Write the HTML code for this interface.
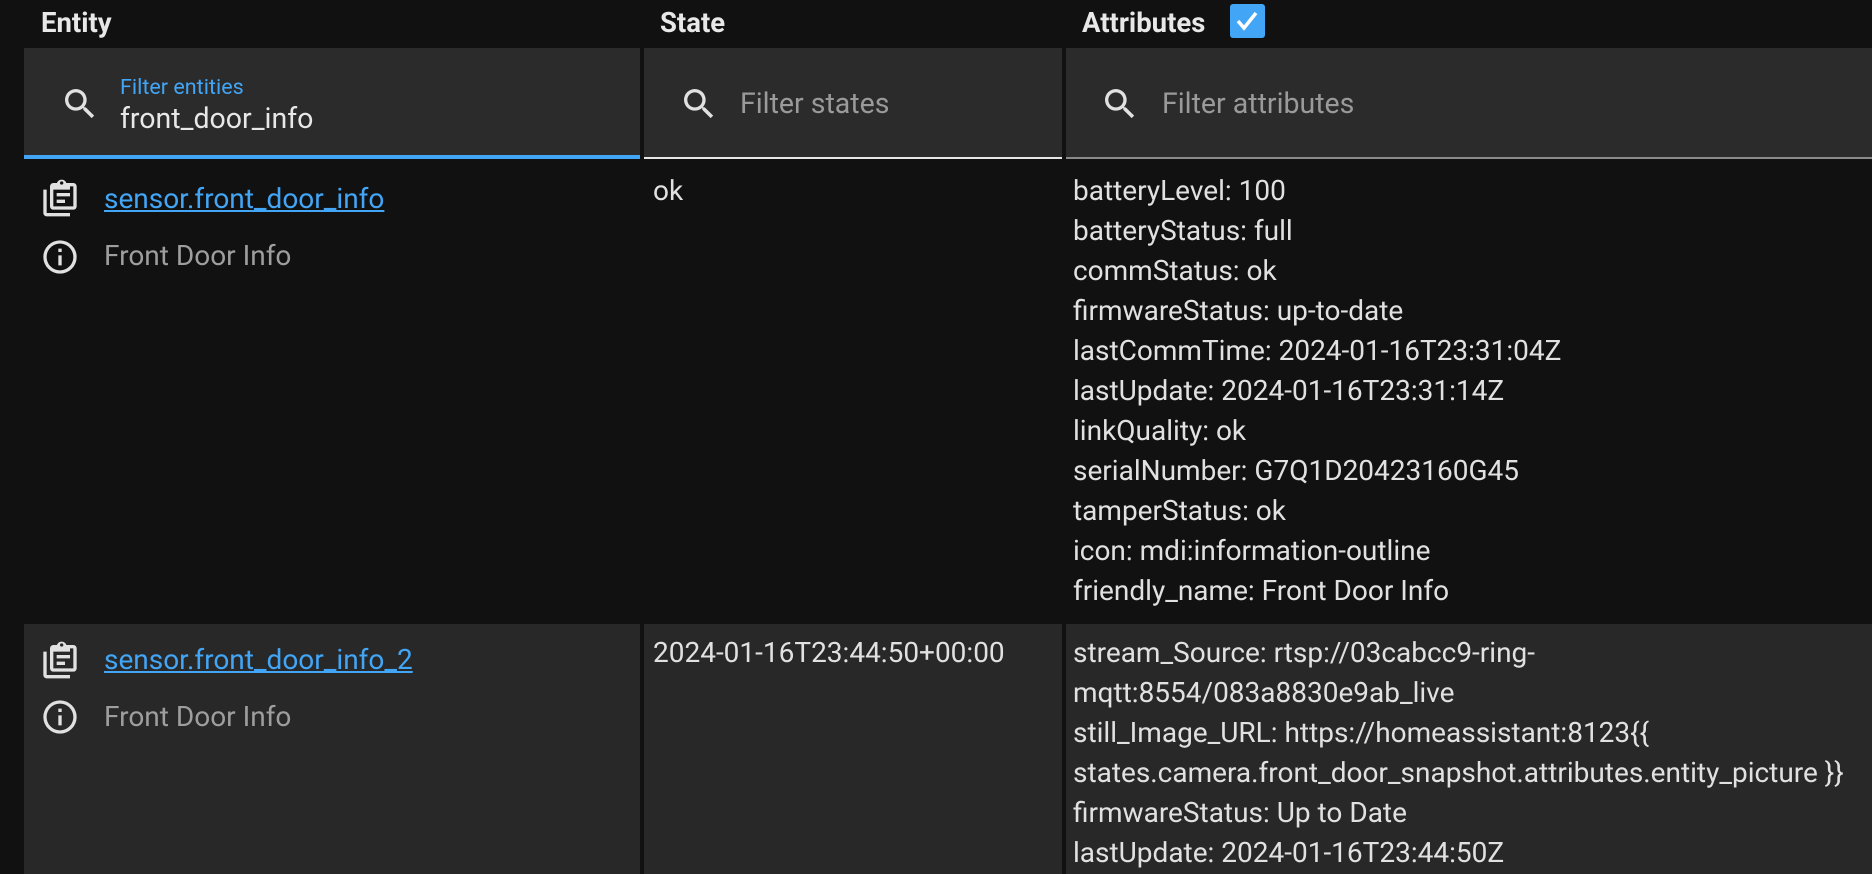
<!DOCTYPE html>
<html><head><meta charset="utf-8"><style>
*{margin:0;padding:0;box-sizing:border-box}
body{width:1872px;height:874px;background:#111111;font-family:"Roboto","Liberation Sans",sans-serif;color:#e1e1e1;overflow:hidden;position:relative}
.abs{position:absolute}
.h{position:absolute;top:6px;font-size:27.5px;font-weight:bold;color:#e8e8e8}
.cb{position:absolute;left:1230px;top:4px;width:35px;height:34px;background:#42a5f5;border-radius:3px}
.filt{position:absolute;top:48px;height:111px;background:#2b2b2b}
.ph{position:absolute;font-size:28.5px;color:#9a9a9a;top:87px}
.t{font-size:28px;line-height:40px;white-space:nowrap}
a{color:#42a5f5;text-decoration:underline;font-size:28px}
.fn{color:#9e9e9e;font-size:28px}
</style></head><body>
<div class="h" style="left:41px">Entity</div>
<div class="h" style="left:660px">State</div>
<div class="h" style="left:1082px">Attributes</div>
<div class="cb"><svg width="35" height="34" viewBox="0 0 35 34"><path d="M8 17l6 7 12-15" stroke="#fff" stroke-width="3.5" fill="none"/></svg></div>

<div class="filt" style="left:24px;width:616px;border-bottom:4px solid #42a5f5"></div>
<div class="filt" style="left:644px;width:418px;border-bottom:2px solid #e6e6e6"></div>
<div class="filt" style="left:1066px;width:806px;border-bottom:2px solid #8a8a8a"></div>

<svg class="abs" style="left:60px;top:84px" width="40" height="40" viewBox="0 0 24 24"><path fill="#e1e1e1" d="M9.5,3A6.5,6.5 0 0,1 16,9.5C16,11.11 15.41,12.59 14.44,13.73L14.71,14H15.5L20.5,19L19,20.5L14,15.5V14.71L13.73,14.44C12.59,15.41 11.11,16 9.5,16A6.5,6.5 0 0,1 3,9.5A6.5,6.5 0 0,1 9.5,3M9.5,5C7,5 5,7 5,9.5C5,12 7,14 9.5,14C12,14 14,12 14,9.5C14,7 12,5 9.5,5Z"/></svg>
<svg class="abs" style="left:679px;top:84px" width="40" height="40" viewBox="0 0 24 24"><path fill="#e1e1e1" d="M9.5,3A6.5,6.5 0 0,1 16,9.5C16,11.11 15.41,12.59 14.44,13.73L14.71,14H15.5L20.5,19L19,20.5L14,15.5V14.71L13.73,14.44C12.59,15.41 11.11,16 9.5,16A6.5,6.5 0 0,1 3,9.5A6.5,6.5 0 0,1 9.5,3M9.5,5C7,5 5,7 5,9.5C5,12 7,14 9.5,14C12,14 14,12 14,9.5C14,7 12,5 9.5,5Z"/></svg>
<svg class="abs" style="left:1100px;top:84px" width="40" height="40" viewBox="0 0 24 24"><path fill="#e1e1e1" d="M9.5,3A6.5,6.5 0 0,1 16,9.5C16,11.11 15.41,12.59 14.44,13.73L14.71,14H15.5L20.5,19L19,20.5L14,15.5V14.71L13.73,14.44C12.59,15.41 11.11,16 9.5,16A6.5,6.5 0 0,1 3,9.5A6.5,6.5 0 0,1 9.5,3M9.5,5C7,5 5,7 5,9.5C5,12 7,14 9.5,14C12,14 14,12 14,9.5C14,7 12,5 9.5,5Z"/></svg>

<div class="abs" style="left:120px;top:75px;font-size:21.5px;color:#42a5f5">Filter entities</div>
<div class="abs" style="left:120px;top:102px;font-size:28.5px;color:#e8e8e8">front_door_info</div>
<div class="ph" style="left:740px">Filter states</div>
<div class="ph" style="left:1162px">Filter attributes</div>

<div class="abs" style="left:24px;top:624px;width:616px;height:250px;background:#282828"></div>
<div class="abs" style="left:644px;top:624px;width:418px;height:250px;background:#282828"></div>
<div class="abs" style="left:1066px;top:624px;width:806px;height:250px;background:#282828"></div>

<svg class="abs" style="left:40px;top:178px" width="40" height="40" viewBox="0 0 24 24"><path fill="#e1e1e1" d="M4,7V21H18V23H4A2,2 0 0,1 2,21V7H4M20,3A2,2 0 0,1 22,5V17A2,2 0 0,1 20,19H8A2,2 0 0,1 6,17V5A2,2 0 0,1 8,3H10.18C10.6,1.84 11.7,1 13,1C14.3,1 15.4,1.84 15.820,3H20M14,3A1,1 0 0,0 13,2A1,1 0 0,0 12,3A1,1 0 0,0 13,4A1,1 0 0,0 14,3M10,7H8V17H20V5H18V7H10M10,9H18V11H10V9M10,13H15V15H10V13Z"/></svg>
<svg class="abs" style="left:40px;top:237px" width="40" height="40" viewBox="0 0 24 24"><path fill="#e1e1e1" d="M11,9H13V7H11M12,20C7.59,20 4,16.41 4,12C4,7.59 7.59,4 12,4C16.41,4 20,7.59 20,12C20,16.41 16.41,20 12,20M12,2A10,10 0 0,0 2,12A10,10 0 0,0 12,22A10,10 0 0,0 22,12A10,10 0 0,0 12,2M11,17H13V11H11V17Z"/></svg>
<a class="abs" style="left:104px;top:182px">sensor.front_door_info</a>
<div class="abs fn" style="left:104px;top:239px">Front Door Info</div>
<div class="abs t" style="left:653px;top:171px">ok</div>
<div class="abs t" style="left:1073px;top:171px">
<div>batteryLevel: 100</div><div>batteryStatus: full</div><div>commStatus: ok</div><div>firmwareStatus: up-to-date</div><div>lastCommTime: 2024-01-16T23:31:04Z</div><div>lastUpdate: 2024-01-16T23:31:14Z</div><div>linkQuality: ok</div><div>serialNumber: G7Q1D20423160G45</div><div>tamperStatus: ok</div><div>icon: mdi:information-outline</div><div>friendly_name: Front Door Info</div>
</div>

<svg class="abs" style="left:40px;top:640px" width="40" height="40" viewBox="0 0 24 24"><path fill="#e1e1e1" d="M4,7V21H18V23H4A2,2 0 0,1 2,21V7H4M20,3A2,2 0 0,1 22,5V17A2,2 0 0,1 20,19H8A2,2 0 0,1 6,17V5A2,2 0 0,1 8,3H10.18C10.6,1.84 11.7,1 13,1C14.3,1 15.4,1.84 15.82,3H20M14,3A1,1 0 0,0 13,2A1,1 0 0,0 12,3A1,1 0 0,0 13,4A1,1 0 0,0 14,3M10,7H8V17H20V5H18V7H10M10,9H18V11H10V9M10,13H15V15H10V13Z"/></svg>
<svg class="abs" style="left:40px;top:697px" width="40" height="40" viewBox="0 0 24 24"><path fill="#e1e1e1" d="M11,9H13V7H11M12,20C7.59,20 4,16.41 4,12C4,7.59 7.59,4 12,4C16.41,4 20,7.59 20,12C20,16.41 16.41,20 12,20M12,2A10,10 0 0,0 2,12A10,10 0 0,0 12,22A10,10 0 0,0 22,12A10,10 0 0,0 12,2M11,17H13V11H11V17Z"/></svg>
<a class="abs" style="left:104px;top:643px">sensor.front_door_info_2</a>
<div class="abs fn" style="left:104px;top:700px">Front Door Info</div>
<div class="abs t" style="left:653px;top:633px">2024-01-16T23:44:50+00:00</div>
<div class="abs t" style="left:1073px;top:633px">
<div>stream_Source: rtsp://03cabcc9-ring-</div><div>mqtt:8554/083a8830e9ab_live</div><div>still_Image_URL: https://homeassistant:8123{{</div><div>states.camera.front_door_snapshot.attributes.entity_picture }}</div><div>firmwareStatus: Up to Date</div><div>lastUpdate: 2024-01-16T23:44:50Z</div>
</div>
</body></html>
